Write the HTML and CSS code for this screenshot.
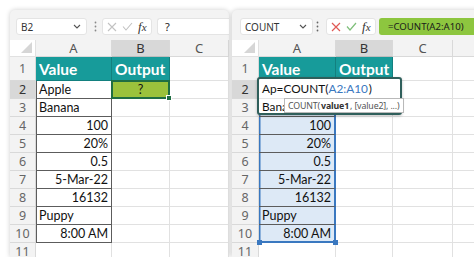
FILE: index.html
```html
<!DOCTYPE html>
<html>
<head>
<meta charset="utf-8">
<link rel="stylesheet" href="styles.css">
</head>
<body>
<div class="stage">
  <section class="panel panel-left">
    <div class="bar">
      <div class="namebox"><span>B2</span><svg width="8" height="5" viewBox="0 0 8 5"><path d="M1 1l3 3 3-3" fill="none" stroke="#555" stroke-width="1.1"/></svg></div>
      <div class="dots"><svg width="3" height="11" viewBox="0 0 3 11"><circle cx="1.5" cy="1.5" r="0.9" fill="#888"/><circle cx="1.5" cy="5.5" r="0.9" fill="#888"/><circle cx="1.5" cy="9.5" r="0.9" fill="#888"/></svg></div>
      <div class="fxbox">
        <svg width="10" height="10" viewBox="0 0 10 10"><path d="M1 1l8 8M9 1l-8 8" stroke="#c2c2c2" stroke-width="1.1"/></svg>
        <svg width="11" height="9" viewBox="0 0 11 9"><path d="M1 4.5l3 3.5 6-7" fill="none" stroke="#c2c2c2" stroke-width="1.1"/></svg>
        <span class="fx">f<i>x</i></span>
      </div>
      <div class="formula">?</div>
    </div>
    <div class="sheet sheet-left">
      <div class="c corner"><span class="tri"></span></div><div class="c hd">A</div><div class="c hd on">B</div><div class="c hd">C</div>
      <div class="c rn">1</div><div class="c tl">Value</div><div class="c tl">Output</div><div class="c"></div>
      <div class="c rn on">2</div><div class="c bd">Apple</div><div class="c green"><span>?</span><span class="active"><span class="handle"></span></span></div><div class="c"></div>
      <div class="c rn">3</div><div class="c bd">Banana</div><div class="c"></div><div class="c"></div>
      <div class="c rn">4</div><div class="c bd r">100</div><div class="c"></div><div class="c"></div>
      <div class="c rn">5</div><div class="c bd r">20%</div><div class="c"></div><div class="c"></div>
      <div class="c rn">6</div><div class="c bd r">0.5</div><div class="c"></div><div class="c"></div>
      <div class="c rn">7</div><div class="c bd r">5-Mar-22</div><div class="c"></div><div class="c"></div>
      <div class="c rn">8</div><div class="c bd r">16132</div><div class="c"></div><div class="c"></div>
      <div class="c rn">9</div><div class="c bd">Puppy</div><div class="c"></div><div class="c"></div>
      <div class="c rn">10</div><div class="c bd r">8:00 AM</div><div class="c"></div><div class="c"></div>
      <div class="c rn">11</div><div class="c"></div><div class="c"></div><div class="c"></div>
    </div>
  </section>

  <section class="panel panel-right">
    <div class="bar">
      <div class="namebox"><span>COUNT</span><svg width="8" height="5" viewBox="0 0 8 5"><path d="M1 1l3 3 3-3" fill="none" stroke="#555" stroke-width="1.1"/></svg></div>
      <div class="dots"><svg width="3" height="11" viewBox="0 0 3 11"><circle cx="1.5" cy="1.5" r="0.9" fill="#666"/><circle cx="1.5" cy="5.5" r="0.9" fill="#666"/><circle cx="1.5" cy="9.5" r="0.9" fill="#666"/></svg></div>
      <div class="fxbox">
        <svg width="10" height="10" viewBox="0 0 10 10"><path d="M1 1l8 8M9 1l-8 8" stroke="#e05a56" stroke-width="1.2"/></svg>
        <svg width="11" height="9" viewBox="0 0 11 9"><path d="M1 4.5l3 3.5 6-7" fill="none" stroke="#7fbf7a" stroke-width="1.2"/></svg>
        <span class="fx">f<i>x</i></span>
      </div>
      <div class="formula">=COUNT(A2:A10)</div>
    </div>
    <div class="sheet sheet-right">
      <div class="c corner"><span class="tri"></span></div><div class="c hd">A</div><div class="c hd on">B</div><div class="c hd">C</div><div class="c hd"></div>
      <div class="c rn">1</div><div class="c tl">Value</div><div class="c tl">Output</div><div class="c"></div><div class="c"></div>
      <div class="c rn on">2</div><div class="c sel anchor">
        <div class="editor">
          <div class="ed-line"><span>Ap</span><span>=COUNT(</span><span class="ref">A2:A10</span><span class="caret"></span><span>)</span></div>
          <div class="ed-line2"><span class="clip">Bana</span><span class="tip">COUNT(<b>value1</b>, [value2], ...)</span></div>
        </div>
      </div><div class="c"></div><div class="c"></div><div class="c"></div>
      <div class="c rn">3</div><div class="c sel"></div><div class="c"></div><div class="c"></div><div class="c"></div>
      <div class="c rn">4</div><div class="c sel r">100</div><div class="c"></div><div class="c"></div><div class="c"></div>
      <div class="c rn">5</div><div class="c sel r">20%</div><div class="c"></div><div class="c"></div><div class="c"></div>
      <div class="c rn">6</div><div class="c sel r">0.5</div><div class="c"></div><div class="c"></div><div class="c"></div>
      <div class="c rn">7</div><div class="c sel r">5-Mar-22</div><div class="c"></div><div class="c"></div><div class="c"></div>
      <div class="c rn">8</div><div class="c sel r">16132</div><div class="c"></div><div class="c"></div><div class="c"></div>
      <div class="c rn">9</div><div class="c sel">Puppy</div><div class="c"></div><div class="c"></div><div class="c"></div>
      <div class="c rn">10</div><div class="c sel last r">8:00 AM<span class="bh bh-l"></span><span class="bh bh-r"></span></div><div class="c"></div><div class="c"></div><div class="c"></div>
      <div class="c rn">11</div><div class="c"></div><div class="c"></div><div class="c"></div><div class="c"></div>
    </div>
  </section>
</div>
</body>
</html>
```

FILE: styles.css
```css
* { box-sizing: border-box; margin: 0; padding: 0; }
html, body { width: 474px; height: 257px; overflow: hidden; background: #fff; }
body { font-family: "Noto Sans", "Open Sans", sans-serif; color: #111; }

.stage { display: flex; gap: 3px; padding: 10px 0 0 10px; height: 257px; }

.panel {
  flex: none;
  background: #f3f3f3;
  border-radius: 5px 5px 0 0;
  box-shadow: 0 0 5px rgba(0,0,0,.2);
  overflow: hidden;
}
.panel-left { width: 219px; }
.panel-right { width: 262px; }

/* formula bar */
.bar { display: flex; align-items: center; height: 30px; padding: 8px 0 5px 6px; }
.panel-right .bar { padding-left: 8px; }

.namebox {
  width: 71px; height: 17px;
  display: flex; align-items: center; justify-content: space-between;
  padding: 0 5px 0 4px;
  background: #fff; border: 1px solid #e4e4e4; border-radius: 3px;
  font-size: 10px; color: #333;
}
.panel-right .namebox { width: 73px; }

.dots { width: 8px; display: flex; justify-content: center; margin-left: 4px; }
.panel-right .dots { margin-left: 0; }

.fxbox {
  width: 50px; height: 17px; margin-left: 3px;
  display: flex; align-items: center; gap: 5px;
  padding: 0 4px;
  background: #fff; border: 1px solid #e4e4e4; border-radius: 3px;
}
.panel-right .fxbox { margin-left: 5px; }
.fx { font-family: "Liberation Serif", serif; font-style: italic; font-size: 13px; color: #333; line-height: 1; }
.fx i { font-size: 11px; }

.formula {
  flex: 1; height: 17px; margin-left: 5px;
  display: flex; align-items: center; padding-left: 7px;
  background: #fff; border: 1px solid #e4e4e4; border-right: 0; border-radius: 3px 0 0 3px;
  font-size: 11px; color: #222;
}
.panel-right .formula { margin-left: 3px; background: #8dc63f; border-color: #8dc63f; font-size: 9.6px; padding-left: 8px; color: #1a1a1a; }

/* grid */
.sheet { display: grid; background: #fff; }
.sheet-left { grid-template-columns: 26px 76px 58px 59px; grid-template-rows: 17px 24px repeat(10, 18px); }
.sheet-right { grid-template-columns: 27px 77px 57px 60px 40px; grid-template-rows: 17px 24px repeat(10, 18px); }

.c {
  display: flex; align-items: center;
  padding: 0 3px;
  border-right: 1px solid #e1e1e1; border-bottom: 1px solid #e1e1e1;
  font-family: "Lato", "Noto Sans", sans-serif;
  font-size: 12.5px; white-space: nowrap;
}
.r { justify-content: flex-end; }

.hd { background: #f3f3f3; color: #555; justify-content: center; font-family: "Noto Sans", sans-serif; font-size: 13px; border-color: #d9d9d9; }
.rn { background: #f3f3f3; color: #666; justify-content: center; font-family: "Noto Sans", sans-serif; font-size: 12.5px; border-color: #d9d9d9; }
.hd.on, .rn.on { background: #d8d8d8; color: #333; }
.hd.on { border-bottom-color: #bdbdbd; }

.corner { justify-content: flex-end; align-items: flex-end; padding: 0 3px 3px 0; }
.tri { width: 0; height: 0; border-left: 11px solid transparent; border-bottom: 11px solid #d6d6d6; }

.tl { background: #179b9a; color: #fff; font-weight: 700; font-size: 15.5px; border-color: #13807f; }

.bd { border-right-color: #5c5c5c; border-bottom-color: #5c5c5c; box-shadow: inset 1px 0 #5c5c5c; }

.green { background: #9bc23c; justify-content: center; position: relative; overflow: visible; }
.active { position: absolute; inset: -1px; border: 2px solid #1f6e43; }
.handle { position: absolute; right: -4px; bottom: -4px; width: 6px; height: 6px; background: #1f6e43; border: 1px solid #fff; }

.sel { background: #dde9f6; border-right: 2px solid #3a78c0; border-bottom-color: #5c5c5c; box-shadow: inset 1.5px 0 #3a78c0; }
.sel.last { border-bottom: 2px solid #3a78c0; position: relative; overflow: visible; }
.bh { position: absolute; bottom: -4px; width: 5px; height: 5px; background: #3a78c0; }
.bh-l { left: -2px; }
.bh-r { right: -4px; }

.anchor { position: relative; overflow: visible; }
.editor {
  position: absolute; left: -2px; top: -4px; width: 145px; height: 38px; z-index: 5;
  background: #fff;
  border: 2px solid #2f5f5b; border-radius: 3px;
  box-shadow: 0 1px 3px rgba(0,0,0,.25);
  display: flex; flex-direction: column;
}
.ed-line { height: 20px; display: flex; align-items: center; padding-left: 3px; font-size: 11.8px; color: #111; border-bottom: 1px solid #e6e6e6; margin-right: 30px; }
.ref { color: #3a78c0; }
.caret { width: 1px; height: 13px; background: #111; margin: 0 0.5px; }
.ed-line2 { height: 14px; display: flex; align-items: center; padding-left: 3px; font-size: 11.8px; color: #111; }
.clip { width: 22px; overflow: hidden; flex: none; }
.tip {
  height: 15px; margin-top: -1px;
  display: flex; align-items: center; padding: 0 3px;
  background: #fff; border: 1px solid #b9b9b9;
  font-family: "Noto Sans", sans-serif;
  font-size: 8.8px; color: #555; letter-spacing: -0.15px;
}
.tip b { color: #333; margin: 0 1px; }
```
